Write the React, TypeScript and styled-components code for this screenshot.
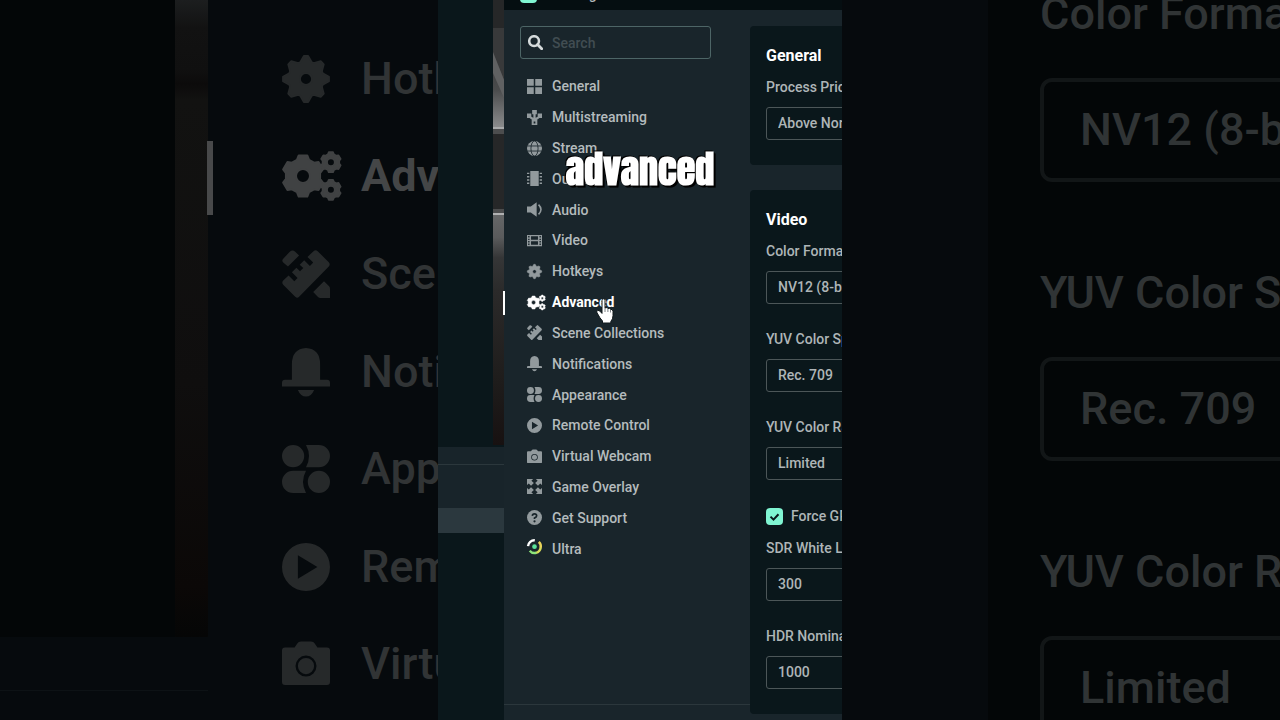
import React from 'react';
import styled, { createGlobalStyle, css } from 'styled-components';

const GlobalStyle = createGlobalStyle`
  * { box-sizing: border-box; }
  body {
    margin: 0;
    background: #030607;
    font-family: Roboto, "Liberation Sans", sans-serif;
    overflow: hidden;
  }
  button, input, select { font-family: inherit; }
`;

/* ---------- page frame ---------- */

const Page = styled.main`
  display: grid;
  grid-template-columns: minmax(0, 1fr) 404px minmax(0, 1fr);
  height: 100vh;
  overflow: hidden;
`;

const LeftBackdrop = styled.aside`
  display: flex;
  min-width: 0;
  overflow: hidden;
  background: #030607;
`;

const RightBackdrop = styled.aside`
  display: flex;
  min-width: 0;
  overflow: hidden;
  background: #060a0d;
`;

const Stage = styled.section`
  position: relative;
  display: flex;
  min-width: 0;
  overflow: hidden;
  background: #0a171b;
`;

/* ---------- enlarged backdrop, left ---------- */

const DimPreview = styled.div`
  flex: 1;
  display: flex;
  flex-direction: column;
  min-width: 0;
`;

const DimCanvas = styled.div`
  flex: 1;
  display: flex;
  justify-content: flex-end;
`;

const DimFootage = styled.div`
  width: 33px;
  background: linear-gradient(#1c1e1f 0, #121212 28px, #101010 70px, #0c0b0b 84px, #121211 100px, #0f0e0e 60%, #0b0807 92%, #050606);
`;

const DimMixerBar = styled.div`
  height: 54px;
  background: #060a0d;
  border-bottom: 1px solid #0d1215;
`;

const DimMixer = styled.div`
  height: 29px;
  background: #060a0d;
`;

const DimNav = styled.nav`
  width: 230px;
  padding: 30px 0 7px;
  display: flex;
  flex-direction: column;
  background: #060a0d;
`;

/* ---------- navigation ---------- */

const NavItem = styled.button<{ $active?: boolean }>`
  position: relative;
  flex: 1;
  display: flex;
  align-items: center;
  width: 100%;
  margin: 0;
  padding: 0 0 0 23px;
  border: 0;
  background: none;
  color: ${(p) => (p.$active ? '#ffffff' : '#b4bbbd')};
  font-size: 14px;
  font-weight: ${(p) => (p.$active ? 700 : 500)};
  line-height: 20px;
  text-align: left;
  white-space: nowrap;
  cursor: pointer;
`;

const DimNavItem = styled(NavItem)`
  padding-left: 74px;
  color: ${(p) => (p.$active ? '#444647' : '#313435')};
  font-size: 45px;
  line-height: 60px;
`;

const ActiveBar = styled.span<{ $large?: boolean }>`
  position: absolute;
  left: -1px;
  top: 50%;
  width: ${(p) => (p.$large ? '6px' : '2px')};
  height: ${(p) => (p.$large ? '74px' : '24px')};
  margin-top: ${(p) => (p.$large ? '-35px' : '-11px')};
  background: ${(p) => (p.$large ? '#48494a' : '#ffffff')};
`;

const IconSlot = styled.span<{ $large?: boolean; $bright?: boolean }>`
  display: flex;
  flex: none;
  width: ${(p) => (p.$large ? '79px' : '25px')};
  color: ${(p) =>
    p.$large ? (p.$bright ? '#404243' : '#26292a') : p.$bright ? '#ffffff' : '#929a9d'};
  svg {
    display: block;
    overflow: visible;
    width: ${(p) => (p.$large ? '48px' : '15px')};
    height: ${(p) => (p.$large ? '48px' : '15px')};
    fill: currentColor;
  }
`;

/* ---------- application behind the settings window ---------- */

const AppStrip = styled.div`
  width: 66px;
  display: flex;
  flex-direction: column;
`;

const PreviewRow = styled.div`
  display: flex;
  justify-content: flex-end;
  height: 447px;
`;

const Footage = styled.svg`
  display: block;
  width: 11px;
  height: 445px;
`;

const StripHeader = styled.div`
  height: 18px;
  background: #18242a;
  border-bottom: 1px solid #2b373c;
`;

const StripToolbar = styled.div`
  height: 43px;
  background: #18242a;
`;

const StripSelected = styled.div`
  height: 25px;
  background: #2b383e;
`;

/* ---------- settings window ---------- */

const Window = styled.div`
  flex: 1;
  display: flex;
  flex-direction: column;
  min-width: 0;
  background: #19252b;
`;

const TitleBar = styled.header`
  flex: none;
  display: flex;
  align-items: flex-end;
  height: 10px;
  padding-left: 16px;
  overflow: hidden;
  background: #050e11;
`;

const TitleContent = styled.div`
  display: flex;
  align-items: center;
  gap: 15px;
  height: 32px;
  color: #b4bbbd;
  font-size: 14px;
  font-weight: 500;
`;

const AppBadge = styled.span`
  width: 17px;
  height: 17px;
  border-radius: 4px;
  background: #80f5d2;
`;

const WindowBody = styled.div`
  flex: 1;
  display: flex;
  align-items: stretch;
  min-height: 0;
`;

const Sidebar = styled.div`
  flex: none;
  display: flex;
  flex-direction: column;
  width: 246px;
`;

const SearchBox = styled.label`
  flex: none;
  display: flex;
  align-items: center;
  gap: 9px;
  height: 33px;
  margin: 16px 39px 0 16px;
  padding: 0 7px;
  border: 1px solid #4d6566;
  border-radius: 3px;
  color: #d5dadb;
  svg { width: 15px; height: 15px; fill: currentColor; flex: none; }
`;

const SearchInput = styled.input`
  flex: 1;
  min-width: 0;
  padding: 0;
  border: 0;
  outline: 0;
  background: none;
  color: #d5dadb;
  font-size: 14px;
  font-weight: 500;
  line-height: 20px;
  &::placeholder { color: #414d52; opacity: 1; }
`;

const Nav = styled.nav`
  flex: none;
  display: flex;
  flex-direction: column;
  height: 493px;
  margin-top: 12px;
`;

const SidebarFooter = styled.div`
  height: 16px;
  margin-top: auto;
  border-top: 1px solid #2b373c;
`;

const Content = styled.div`
  flex: 1;
  min-width: 0;
  padding-top: 16px;
  overflow: hidden;
`;

const Card = styled.section`
  width: 480px;
  margin-bottom: 25px;
  padding: 18px 16px 2px;
  border-radius: 4px;
  background: #0a171b;
`;

const CardTitle = styled.h2`
  margin: 0 0 7px;
  color: #ffffff;
  font-size: 16px;
  font-weight: 700;
  line-height: 24px;
`;

const Field = styled.div`
  display: flex;
  flex-direction: column;
  gap: 8px;
  margin-bottom: 23px;
`;

const FieldLabel = styled.label`
  color: #aeb5b7;
  font-size: 14px;
  font-weight: 500;
  line-height: 24px;
  white-space: nowrap;
`;

const control = css`
  display: block;
  width: 100%;
  height: 33px;
  margin: 0;
  padding: 0 11px 2px;
  border: 1px solid #4c5658;
  border-radius: 3px;
  outline: 0;
  appearance: none;
  background: transparent;
  color: #aeb5b7;
  font-size: 14px;
  font-weight: 500;
`;

const Select = styled.select`${control}`;
const TextInput = styled.input`${control}`;

const CheckRow = styled.label`
  display: flex;
  align-items: center;
  gap: 8px;
  height: 26px;
  margin-bottom: 7px;
  color: #aeb5b7;
  font-size: 14px;
  font-weight: 500;
  white-space: nowrap;
`;

const CheckMark = styled.span`
  display: grid;
  flex: none;
  width: 17px;
  height: 17px;
  input, svg { grid-area: 1 / 1; margin: 0; width: 17px; height: 17px; }
  input { appearance: none; border-radius: 4px; background: #80f5d2; }
  svg { pointer-events: none; }
`;

/* ---------- enlarged backdrop, right ---------- */

const DimPanel = styled.div`
  flex: 1;
  min-width: 0;
  margin-left: 146px;
  padding: 0 0 0 52px;
  overflow: hidden;
  background: #030607;
`;

const DimField = styled.div`
  display: flex;
  flex-direction: column;
  gap: 34px;
  width: 900px;
  margin-bottom: 81px;
`;

const DimLabel = styled.label`
  color: #303435;
  font-size: 45px;
  font-weight: 500;
  line-height: 60px;
  height: 60px;
  white-space: nowrap;
`;

const DimSelect = styled.select`
  width: 100%;
  height: 104px;
  padding: 0 36px 2px;
  border: 4px solid #121617;
  border-radius: 12px;
  outline: 0;
  appearance: none;
  background: transparent;
  color: #303435;
  font-size: 45px;
  font-weight: 500;
`;

const DimFields = styled.div`
  margin-top: -16px;
`;

/* ---------- overlays ---------- */

const Caption = styled.p`
  position: absolute;
  left: 202px;
  width: 0;
  top: 144px;
  margin: 0;
  display: flex;
  justify-content: center;
  color: #ffffff;
  font-family: Impact, Anton, "Roboto Condensed", "Open Sans Condensed", Roboto, sans-serif;
  font-size: 38px;
  font-weight: 900;
  line-height: 50px;
  white-space: nowrap;
  filter: drop-shadow(2px 2px 0 #000000) drop-shadow(-1px -1px 0 #000000);
  pointer-events: none;
`;

const Pointer = styled.svg`
  position: absolute;
  left: 158px;
  top: 298px;
  width: 18px;
  height: 27px;
  pointer-events: none;
`;

/* ---------- icons, all on a 16-unit grid ---------- */

const gearPath = (
  cx: number, cy: number, r: number, hole: number, teeth: number, depth: number, base: number, tip: number,
) => {
  const pts: string[] = [];
  const step = (Math.PI * 2) / teeth;
  for (let i = 0; i < teeth; i++) {
    const a = i * step - Math.PI / 2;
    [[-base, r - depth], [-tip, r], [tip, r], [base, r - depth]].forEach(([o, rad]) => {
      pts.push(`${(cx + Math.cos(a + o * step) * rad).toFixed(2)} ${(cy + Math.sin(a + o * step) * rad).toFixed(2)}`);
    });
  }
  return `M${pts.join('L')}ZM${cx - hole} ${cy}a${hole} ${hole} 0 1 0 ${hole * 2} 0a${hole} ${hole} 0 1 0 ${-hole * 2} 0Z`;
};

const icons: Record<string, React.ReactNode> = {
  general: <path d="M0 0h7.2v7.2H0zM8.8 0H16v7.2H8.8zM0 8.8h7.2V16H0zM8.8 8.8H16V16H8.8z" />,
  multi: (
    <path
      fillRule="evenodd"
      d="M5.500 0h5v4.600H9.200v3.600l2.200-1.100V3.600H16v4.800h-2.800l-2.700 2.200h.5V16H5v-5.400h.5L2.800 8.400H0V3.600h4.600v3.500l2.200 1.100V4.600H5.500zM7.100 12.300v2h1.800v-2z"
    />
  ),
  stream: (
    <>
      <circle cx="8" cy="8" r="8" />
      <g fill="none" stroke="#19252b" strokeWidth="0.900">
        <ellipse cx="8" cy="8" rx="3.800" ry="8" />
        <path d="M0 5.300h16M0 10.700h16" />
      </g>
    </>
  ),
  output: (
    <path d="M3.500 0h9v16h-9zM0 1.800h2.500v1.500H0zM0 5.300h2.500v1.500H0zM0 8.800h2.500v1.500H0zM0 12.300h2.500v1.500H0zM13.500 1.800H16v1.500h-2.500zM13.500 5.300H16v1.500h-2.500zM13.500 8.800H16v1.500h-2.500zM13.500 12.300H16v1.500h-2.500z" />
  ),
  audio: (
    <>
      <path d="M0 4.800h4L10.300.3v15.400L4 11.200H0z" />
      <path d="M12.300 2.800q5.200 5.200 0 10.400" fill="none" stroke="currentColor" strokeWidth="1.700" />
    </>
  ),
  video: (
    <path
      fillRule="evenodd"
      d="M0 2h16v12H0zM1.200 3.300v1.500h1.500V3.300zM1.200 6v1.500h1.500V6zM1.200 8.600v1.500h1.500V8.600zM1.200 11.200v1.500h1.500v-1.500zM13.300 3.300v1.500h1.500V3.300zM13.300 6v1.500h1.500V6zM13.300 8.600v1.500h1.500V8.600zM13.300 11.200v1.500h1.500v-1.500zM4.300 3.400v3.900h7.400V3.400zM4.300 8.700v3.900h7.400V8.700z"
    />
  ),
  hotkeys: (
    <path
      fillRule="evenodd"
      strokeLinejoin="round"
      stroke="currentColor"
      strokeWidth="0.600"
      d={gearPath(8, 8, 7.7, 2, 8, 1.800, 0.42, 0.12)}
    />
  ),
  advanced: (
    <g strokeLinejoin="round" stroke="currentColor" strokeWidth="0.600">
      <path fillRule="evenodd" d={gearPath(7, 8, 7, 2.300, 6, 1.200, 0.34, 0.2)} />
      <path fillRule="evenodd" d={gearPath(16.300, 3.400, 3.400, 1.300, 6, 0.600, 0.34, 0.2)} />
      <path fillRule="evenodd" d={gearPath(16.300, 12.600, 3.400, 1.300, 6, 0.600, 0.34, 0.2)} />
    </g>
  ),
  scene: (
    <path d="M.4 2.900 2.600.600q.9-.9 1.800 0l1.300 1.200-3.700 3.700L.400 4.200q-.6-.7 0-1.300zM10.500.400q.7-.6 1.400 0l3.700 3.700q.6.700 0 1.400L5.700 15.600q-.6.600-1.300 0L.400 11.600q-.6-.7 0-1.400L2.200 8.500l1.900 1.900 1.100-1.100-1.900-1.900 1.500-1.500 1.200 1.200 1.100-1.100L5.900 4.900l1.500-1.500 1.900 1.900 1.100-1.100L8.500 2.300zM14 10.400l1.700 1.700q.3.300.3.800V16h-3.200q-.5 0-.8-.3L10.400 14z" />
  ),
  notifications: (
    <path d="M8 0q4.700.300 4.700 5.400v5.200H15q1 0 1 1v1.200H0v-1.200q0-1 1-1h2.300V5.400Q3.300.300 8 0zM5.300 14h5.400Q9.800 16.200 8 16.200T5.300 14z" />
  ),
  appearance: (
    <path d="M3.700 0a3.700 3.700 0 1 1 0 7.400a3.700 3.700 0 1 1 0-7.400zM8 0h4.300a3.700 3.700 0 0 1 0 7.400H8Q10 3.700 8 0zM3.700 8.600H8Q6 12.300 8 16H3.700a3.700 3.700 0 0 1 0-7.400zM12.300 8.600a3.700 3.700 0 1 1 0 7.400a3.700 3.700 0 1 1 0-7.400z" />
  ),
  remote: <path fillRule="evenodd" d="M8 0a8 8 0 1 1 0 16A8 8 0 1 1 8 0zM5.300 4.100v7.800L11.800 8z" />,
  webcam: (
    <path
      fillRule="evenodd"
      d="M1 2.500h3.200l.9-1.300Q5.500.5 6.300.5h3.400q.8 0 1.200.700l.9 1.300H15q1 0 1 1V14q0 1-1 1H1q-1 0-1-1V3.500q0-1 1-1zM8 5.200a3.500 3.500 0 1 0 0 7a3.500 3.500 0 1 0 0-7zM8 6a2.700 2.700 0 1 1 0 5.400a2.700 2.700 0 1 1 0-5.400z"
    />
  ),
  overlay: (
    <path d="M0 0h6.500L4.700 1.900l2.600 2.400-3 3-2.400-2.600L0 6.500zM16 0v6.500l-1.900-1.800-2.400 2.600-3-3 2.600-2.400L9.500 0zM0 16V9.500l1.900 1.800 2.400-2.600 3 3-2.600 2.400L6.500 16zM16 16H9.500l1.800-1.900-2.600-2.400 3-3 2.400 2.600L16 9.500z" />
  ),
  support: (
    <>
      <circle cx="8" cy="8" r="8" />
      <path d="M5.700 6.300Q5.800 4.200 8 4.200t2.300 1.900Q10.300 7.400 8 8.600v1.100" fill="none" stroke="#19252b" strokeWidth="1.800" />
      <circle cx="8" cy="12" r="1.200" fill="#19252b" />
    </>
  ),
  ultra: (
    <g fill="none" strokeWidth="2.600">
      <path d="M1.100 5.500A6.800 6.800 0 0 1 8.300-.8" stroke="#ffffff" />
      <path d="M12.600.9A6.800 6.800 0 0 1 14.500 7.500" stroke="#e9d25a" />
      <path d="M14.600 7A6.800 6.800 0 0 1 9.500 12.600" stroke="#d6db58" />
      <path d="M10 12.500A6.800 6.800 0 0 1 2.900 10.300" stroke="#8be37a" />
      <circle cx="8" cy="6" r="2.500" fill="#5be39a" stroke="none" />
    </g>
  ),
};

const Icon = ({ name }: { name: string }) => (
  <svg viewBox="0 0 16 16" aria-hidden="true">{icons[name]}</svg>
);

/* ---------- data ---------- */

const navItems = [
  ['general', 'General'],
  ['multi', 'Multistreaming'],
  ['stream', 'Stream'],
  ['output', 'Output'],
  ['audio', 'Audio'],
  ['video', 'Video'],
  ['hotkeys', 'Hotkeys'],
  ['advanced', 'Advanced'],
  ['scene', 'Scene Collections'],
  ['notifications', 'Notifications'],
  ['appearance', 'Appearance'],
  ['remote', 'Remote Control'],
  ['webcam', 'Virtual Webcam'],
  ['overlay', 'Game Overlay'],
  ['support', 'Get Support'],
  ['ultra', 'Ultra'],
];

const dimFields = [
  ['Color Format', 'NV12 (8-bit)'],
  ['YUV Color Space', 'Rec. 709'],
  ['YUV Color Range', 'Limited'],
];

const SelectField = ({ id, label, value }: { id: string; label: string; value: string }) => (
  <Field>
    <FieldLabel htmlFor={id}>{label}</FieldLabel>
    <Select id={id} defaultValue={value}><option>{value}</option></Select>
  </Field>
);

const NumberField = ({ id, label, value }: { id: string; label: string; value: string }) => (
  <Field>
    <FieldLabel htmlFor={id}>{label}</FieldLabel>
    <TextInput id={id} defaultValue={value} />
  </Field>
);

export default function App() {
  return (
    <>
      <GlobalStyle />
      <Page>
        <LeftBackdrop>
          <DimPreview>
            <DimCanvas><DimFootage /></DimCanvas>
            <DimMixerBar />
            <DimMixer />
          </DimPreview>
          <DimNav>
            {navItems.slice(6, 13).map(([icon, label]) => (
              <DimNavItem key={icon} type="button" $active={icon === 'advanced'}>
                {icon === 'advanced' && <ActiveBar $large />}
                <IconSlot $large $bright={icon === 'advanced'}><Icon name={icon} /></IconSlot>
                {label}
              </DimNavItem>
            ))}
          </DimNav>
        </LeftBackdrop>

        <Stage>
          <AppStrip>
            <PreviewRow>
              <Footage viewBox="0 0 11 445" preserveAspectRatio="none" aria-hidden="true">
                <defs>
                  <linearGradient id="wall" x1="0" y1="0" x2="0" y2="1">
                    <stop offset="0" stopColor="#3a3b3c" />
                    <stop offset="0.5" stopColor="#4a4b4c" />
                    <stop offset="1" stopColor="#8a8b8c" />
                  </linearGradient>
                  <linearGradient id="desk" x1="0" y1="0" x2="0" y2="1">
                    <stop offset="0" stopColor="#686a6b" />
                    <stop offset="0.35" stopColor="#5a5b5c" />
                    <stop offset="0.6" stopColor="#353637" />
                    <stop offset="1" stopColor="#2b2b2b" />
                  </linearGradient>
                  <linearGradient id="floor" x1="0" y1="0" x2="0" y2="1">
                    <stop offset="0" stopColor="#2b2a2a" />
                    <stop offset="0.6" stopColor="#1e1c1b" />
                    <stop offset="1" stopColor="#171111" />
                  </linearGradient>
                </defs>
                <rect width="11" height="445" fill="#262728" />
                <rect y="28" width="11" height="99" fill="#38393a" />
                <path d="M0 52 11 80V127H0z" fill="url(#wall)" />
                <path d="M0 73 11 98V80L0 52z" fill="#606162" />
                <rect y="127" width="11" height="2" fill="#a8a9aa" />
                <rect y="129" width="11" height="5" fill="#4c4d4e" />
                <rect y="209" width="11" height="81" fill="url(#desk)" />
                <rect y="209" width="11" height="4" fill="#4c4d4e" />
                <rect y="213" width="11" height="2" fill="#b0b1b2" />
                <rect y="290" width="11" height="155" fill="url(#floor)" />
              </Footage>
            </PreviewRow>
            <StripHeader />
            <StripToolbar />
            <StripSelected />
          </AppStrip>

          <Window>
            <TitleBar>
              <TitleContent><AppBadge />Settings</TitleContent>
            </TitleBar>
            <WindowBody>
              <Sidebar>
                <SearchBox>
                  <svg viewBox="0 0 16 16" aria-hidden="true">
                    <circle cx="6.500" cy="6.500" r="5.200" fill="none" stroke="currentColor" strokeWidth="2.700" />
                    <path d="m10.200 10.200 4.400 4.400" fill="none" stroke="currentColor" strokeWidth="3" strokeLinecap="round" />
                  </svg>
                  <SearchInput type="text" placeholder="Search" aria-label="Search" />
                </SearchBox>
                <Nav>
                  {navItems.map(([icon, label]) => (
                    <NavItem key={icon} type="button" $active={icon === 'advanced'}>
                      {icon === 'advanced' && <ActiveBar />}
                      <IconSlot $bright={icon === 'advanced'}><Icon name={icon} /></IconSlot>
                      {label}
                    </NavItem>
                  ))}
                </Nav>
                <SidebarFooter />
              </Sidebar>
              <Content>
                <Card>
                  <CardTitle>General</CardTitle>
                  <SelectField id="priority" label="Process Priority" value="Above Normal" />
                </Card>
                <Card>
                  <CardTitle>Video</CardTitle>
                  <SelectField id="format" label="Color Format" value="NV12 (8-bit)" />
                  <SelectField id="space" label="YUV Color Space" value="Rec. 709" />
                  <SelectField id="range" label="YUV Color Range" value="Limited" />
                  <CheckRow>
                    <CheckMark>
                      <input type="checkbox" defaultChecked />
                      <svg viewBox="0 0 17 17" aria-hidden="true">
                        <path d="m4.500 8.600 3 3 5-5.400" fill="none" stroke="#0a171b" strokeWidth="2" />
                      </svg>
                    </CheckMark>
                    Force GPU
                  </CheckRow>
                  <NumberField id="sdr" label="SDR White Level" value="300" />
                  <NumberField id="hdr" label="HDR Nominal" value="1000" />
                </Card>
              </Content>
            </WindowBody>
          </Window>

          <Pointer viewBox="0 0 18 27" aria-hidden="true">
            <path
              d="M6 2.500Q6 .800 7.500.800T9 2.500V10l1-.400q1.400-.3 1.900.9 1.900-.6 2.500.800 2.600-.3 2.600 2.200v4.200q0 3.300-2.200 5.800V25H6.500v-2Q4 20.500 1 14.800q-.6-1.600.700-2.200t2.500.800L6 15.400z"
              fill="#ffffff"
              stroke="#10181b"
              strokeWidth="1"
            />
            <path d="M9 10v4M11.900 10.800V14M14.500 11.600V14.500" stroke="#5a6266" strokeWidth="0.800" />
          </Pointer>
          <Caption>advanced</Caption>
        </Stage>

        <RightBackdrop>
          <DimPanel>
            <DimFields>
              {dimFields.map(([label, value], i) => (
                <DimField key={label}>
                  <DimLabel htmlFor={`backdrop-${i}`}>{label}</DimLabel>
                  <DimSelect id={`backdrop-${i}`} defaultValue={value}><option>{value}</option></DimSelect>
                </DimField>
              ))}
            </DimFields>
          </DimPanel>
        </RightBackdrop>
      </Page>
    </>
  );
}
